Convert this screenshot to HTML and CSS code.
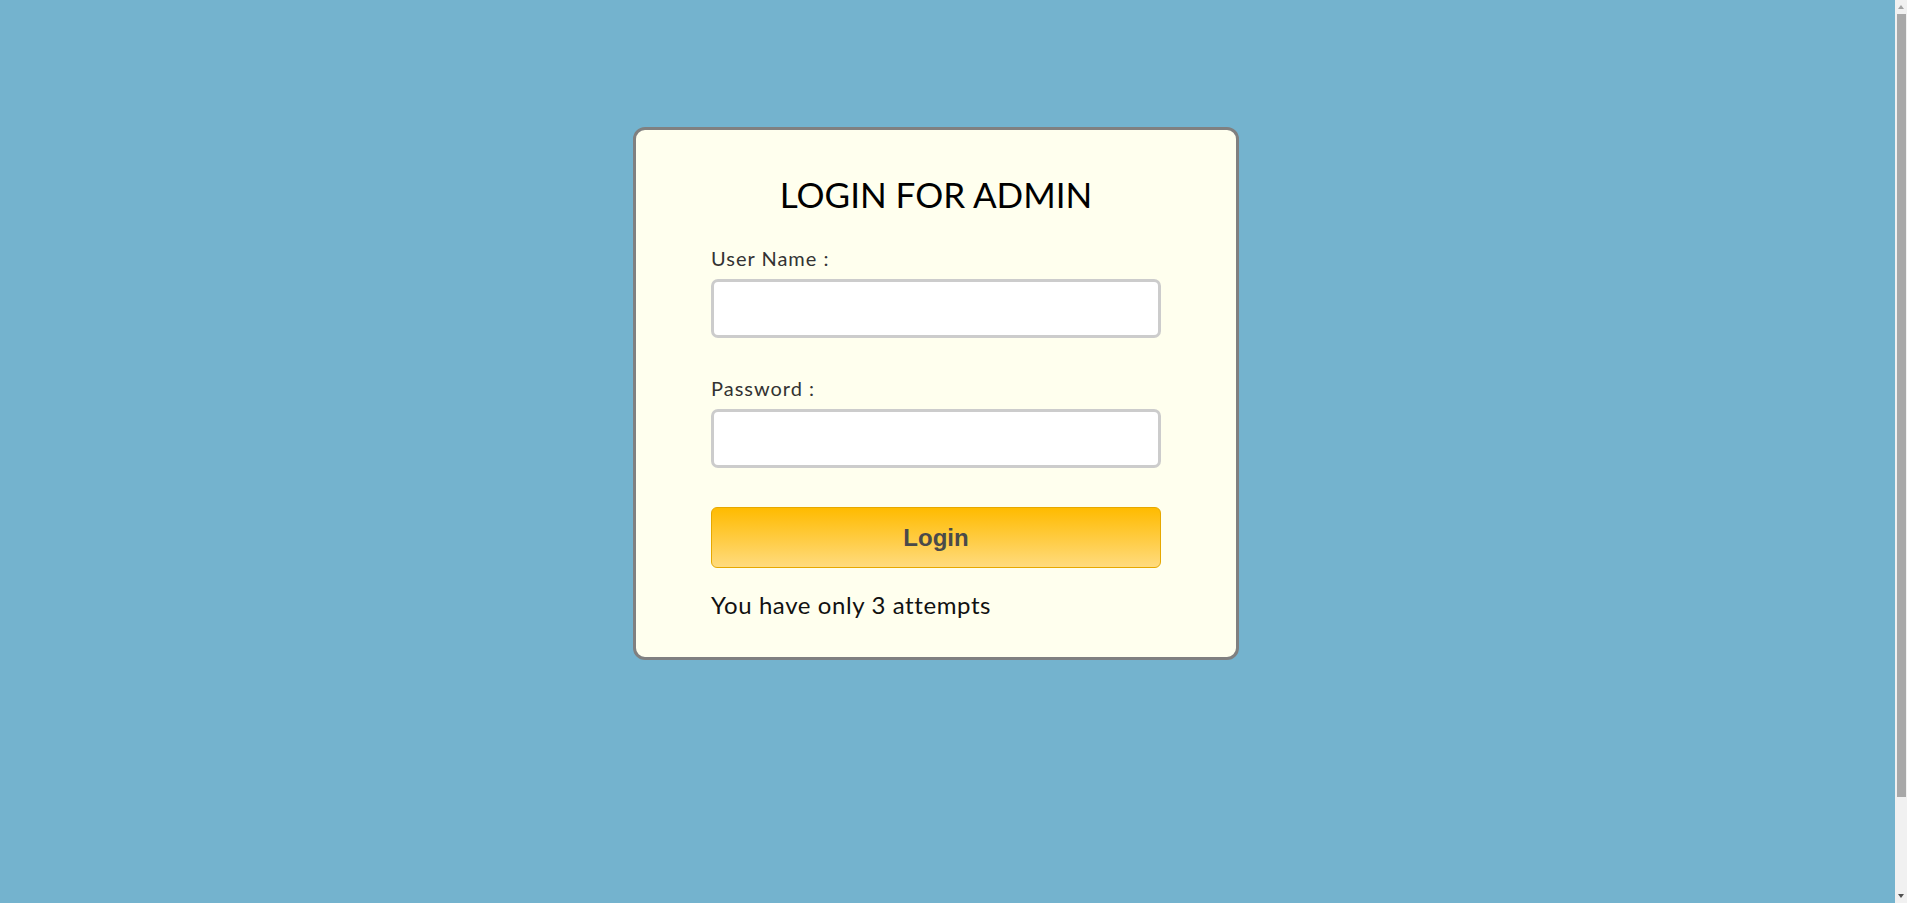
FILE: index.html
```html
<!DOCTYPE html>
<html lang="en">
<head>
<meta charset="utf-8">
<title>Login for Admin</title>
<link rel="stylesheet" href="styles.css">
</head>
<body>
<div class="page">
  <form class="card" action="#" onsubmit="return false;">
    <h1 class="title">LOGIN FOR ADMIN</h1>
    <label class="label" for="user">User Name :</label>
    <input class="field" id="user" type="text">
    <label class="label label-second" for="pass">Password :</label>
    <input class="field" id="pass" type="password">
    <button class="btn" type="submit">Login</button>
    <p class="note">You have only 3 attempts</p>
  </form>
</div>
<div class="scrollbar" aria-hidden="true">
  <span class="sb-arrow sb-up"></span>
  <span class="sb-thumb"></span>
  <span class="sb-arrow sb-down"></span>
</div>
</body>
</html>
```
FILE: styles.css
```css
html, body {
  margin: 0;
  padding: 0;
}
body {
  background: #74b3ce;
  font-family: "Lato", "Noto Sans", sans-serif;
}
.page {
  display: flex;
  justify-content: center;
  padding: 127px 35px 350px 0;
}
.card {
  box-sizing: border-box;
  width: 606px;
  border: 3px solid #808080;
  border-radius: 12px;
  background: #ffffee;
  padding: 43px 75px 38px;
  display: flex;
  flex-direction: column;
}
.title {
  margin: 0 0 30px;
  font-size: 35px;
  line-height: 43px;
  font-weight: 400;
  text-align: center;
  color: #000;
}
.label {
  display: block;
  font-size: 20px;
  line-height: 24px;
  letter-spacing: 1px;
  color: #333;
  margin-bottom: 9px;
}
.label-second {
  margin-top: 38px;
}
.field {
  display: block;
  box-sizing: border-box;
  width: 450px;
  height: 59px;
  margin: 0;
  border: 3px solid #cccccc;
  border-radius: 7px;
  background: #fff;
  font-size: 18px;
  padding: 0 10px;
  outline: none;
}
.btn {
  display: block;
  box-sizing: border-box;
  width: 450px;
  height: 61px;
  margin: 39px 0 0;
  border: 1px solid #e6a800;
  border-radius: 6px;
  background: linear-gradient(to bottom, #ffbb00 0%, #ffdb7e 100%);
  font-family: "Liberation Sans", Arial, sans-serif;
  font-weight: 700;
  font-size: 24px;
  color: #4a4a4a;
  cursor: pointer;
}
.note {
  margin: 23px 0 0;
  font-size: 24px;
  line-height: 28px;
  letter-spacing: 0.6px;
  color: #111;
}
.scrollbar {
  position: fixed;
  top: 0;
  right: 0;
  width: 12px;
  height: 100%;
  background: #f1f1f1;
}
.sb-thumb {
  position: absolute;
  left: 2px;
  right: 1px;
  top: 14px;
  height: 783px;
  background: #a8a8a8;
}
.sb-arrow {
  position: absolute;
  left: 3px;
  width: 0;
  height: 0;
  border-left: 3px solid transparent;
  border-right: 3px solid transparent;
}
.sb-up {
  top: 5px;
  border-bottom: 4px solid #a3a3a3;
}
.sb-down {
  bottom: 5px;
  border-top: 4px solid #505050;
}
```
